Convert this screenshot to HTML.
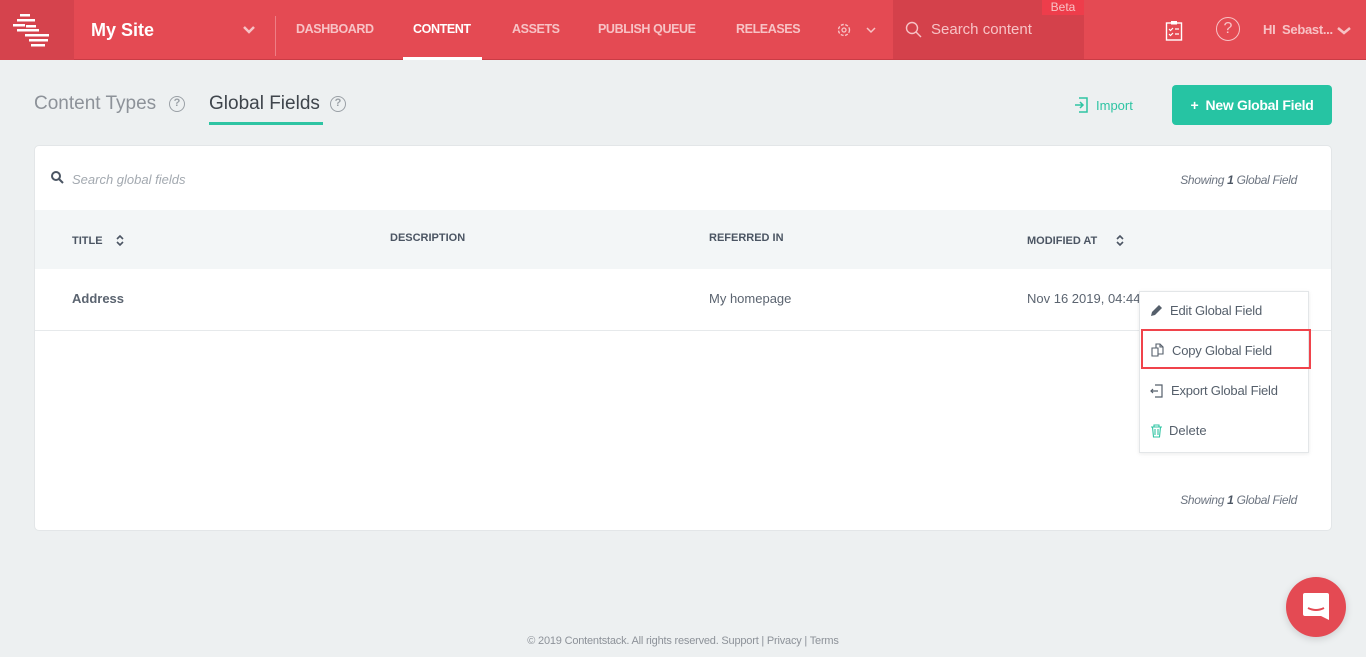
<!DOCTYPE html>
<html><head><style>
*{box-sizing:border-box;margin:0;padding:0}
body{width:1366px;height:657px;background:#edf0f1;font-family:"Liberation Sans",sans-serif;position:relative;overflow:hidden}
.top{position:absolute;left:0;top:0;width:1366px;height:60px;background:#e44a53;border-bottom:1px solid #c93c45}
.abs{position:absolute}
.nav{position:absolute;top:22px;font-size:12.5px;color:#f7c2c5;font-weight:bold;letter-spacing:-0.4px}
.card{position:absolute;left:34px;top:145px;width:1298px;height:386px;background:#fff;border:1px solid #e3e6e8;border-radius:5px}
.th{position:absolute;font-size:11px;font-weight:bold;color:#4b5563}
.mi{position:absolute;left:10px;font-size:13px;color:#555f6b}
</style></head><body>
<div class="top">
  <div class="abs" style="left:0;top:0;width:74px;height:60px;background:#d5434d"></div>
  <svg class="abs" style="left:12px;top:12px" width="44" height="36" viewBox="0 0 44 36" fill="#fff">
    <rect x="8" y="2" width="10" height="2.5"/><rect x="5" y="7" width="18" height="2.5"/><rect x="1" y="12" width="12" height="2.5"/><rect x="14" y="13" width="10" height="2.5"/>
    <rect x="5" y="17" width="22" height="2.5"/><rect x="13" y="22" width="24" height="2.5"/><rect x="17" y="27" width="19" height="2.5"/><rect x="19" y="32" width="14" height="2.5"/>
  </svg>
  <div class="abs" style="left:91px;top:20px;font-size:18px;font-weight:bold;color:#fff">My Site</div>
  <svg class="abs" style="left:242px;top:25px" width="14" height="10"><path d="M2 2l5 5 5-5" stroke="#f7c2c5" stroke-width="2.5" fill="none"/></svg>
  <div class="abs" style="left:275px;top:16px;width:1px;height:40px;background:#ee7e85"></div>
  <div class="nav" style="left:296px">DASHBOARD</div>
  <div class="nav" style="left:413px;color:#fff">CONTENT</div>
  <div class="abs" style="left:403px;top:57px;width:79px;height:3px;background:#fff"></div>
  <div class="nav" style="left:512px">ASSETS</div>
  <div class="nav" style="left:598px">PUBLISH QUEUE</div>
  <div class="nav" style="left:736px">RELEASES</div>
  <svg class="abs" style="left:836px;top:22px" width="16" height="16" viewBox="0 0 16 16"><circle cx="8" cy="8" r="5.5" stroke="#f7c2c5" stroke-width="1.4" fill="none" stroke-dasharray="3 1.5"/><circle cx="8" cy="8" r="2" stroke="#f7c2c5" stroke-width="1.3" fill="none"/></svg>
  <svg class="abs" style="left:865px;top:26px" width="12" height="8"><path d="M2 2l4 4 4-4" stroke="#f7c2c5" stroke-width="1.5" fill="none"/></svg>
  <div class="abs" style="left:893px;top:0;width:191px;height:59px;background:#d4414b"></div>
  <div class="abs" style="left:1042px;top:0;width:42px;height:15px;background:#ee3d4b;color:#f7c2c5;font-size:12px;text-align:center;line-height:15px">Beta</div>
  <svg class="abs" style="left:905px;top:21px" width="17" height="17"><circle cx="7" cy="7" r="5.5" stroke="#f7c2c5" stroke-width="1.4" fill="none"/><path d="M11 11l5 5" stroke="#f7c2c5" stroke-width="1.4"/></svg>
  <div class="abs" style="left:931px;top:21px;font-size:15px;color:#f7c2c5">Search content</div>
  <svg class="abs" style="left:1165px;top:20px" width="18" height="21"><rect x="1.5" y="3" width="15" height="17" stroke="#fff" stroke-width="1.4" fill="none"/><rect x="6" y="1" width="6" height="3.5" fill="#fff"/><path d="M4 9l1.5 1.5 2.5-2.5M10 9h4M4 14l1.5 1.5 2.5-2.5M10 14h4" stroke="#fff" stroke-width="1.2" fill="none"/></svg>
  <div class="abs" style="left:1216px;top:17px;width:24px;height:24px;border:1.5px solid #f7c2c5;border-radius:50%;color:#f7c2c5;font-size:16px;text-align:center;line-height:21px">?</div>
  <div class="abs" style="left:1263px;top:22px;font-size:13px;font-weight:bold;color:#f7c2c5;letter-spacing:-0.3px">HI &nbsp;Sebast...</div>
  <svg class="abs" style="left:1336px;top:26px" width="16" height="10"><path d="M2 2l6 5 6-5" stroke="#f7c2c5" stroke-width="2.5" fill="none"/></svg>
</div>

<div class="abs" style="left:34px;top:93px;font-size:19px;color:#8d9299">Content Types</div>
<div class="abs" style="left:169px;top:96px;width:16px;height:16px;border:1.5px solid #9aa0a6;border-radius:50%;font-size:11px;color:#9aa0a6;text-align:center;line-height:13px;font-weight:bold">?</div>
<div class="abs" style="left:209px;top:93px;font-size:19px;color:#3f454c">Global Fields</div>
<div class="abs" style="left:330px;top:96px;width:16px;height:16px;border:1.5px solid #9aa0a6;border-radius:50%;font-size:11px;color:#9aa0a6;text-align:center;line-height:13px;font-weight:bold">?</div>
<div class="abs" style="left:209px;top:122px;width:114px;height:3px;background:#2ec4a3"></div>

<svg class="abs" style="left:1074px;top:97px" width="14" height="16"><path d="M5 1h8v14H5M1 8h8M6 5l3 3-3 3" stroke="#2ec4a3" stroke-width="1.5" fill="none"/></svg>
<div class="abs" style="left:1096px;top:98px;font-size:13px;color:#2ec4a3">Import</div>
<div class="abs" style="left:1172px;top:85px;width:160px;height:40px;background:#26c4a3;border-radius:4px;color:#fff;font-size:14px;font-weight:bold;line-height:40px;text-align:center;letter-spacing:-0.3px">+ &nbsp;New Global Field</div>

<div class="card">
  <svg class="abs" style="left:16px;top:25px" width="13" height="13"><circle cx="5" cy="5" r="4" stroke="#4b5563" stroke-width="2" fill="none"/><path d="M8 8l4 4" stroke="#4b5563" stroke-width="2"/></svg>
  <div class="abs" style="left:37px;top:26px;font-size:13px;font-style:italic;color:#a3a9b0">Search global fields</div>
  <div class="abs" style="right:34px;top:27px;font-size:12px;font-style:italic;color:#6c7480;letter-spacing:-0.3px">Showing <b style="color:#4b5563">1</b> Global Field</div>
  <div class="abs" style="left:0;top:64px;width:1296px;height:59px;background:#f3f6f7"></div>
  <div class="th" style="left:37px;top:89px">TITLE</div>
  <svg class="abs" style="left:80px;top:88px" width="10" height="13"><path d="M2 5l3-3 3 3M2 8l3 3 3-3" stroke="#4b5563" stroke-width="1.6" fill="none"/></svg>
  <div class="th" style="left:355px;top:86px">DESCRIPTION</div>
  <div class="th" style="left:674px;top:86px">REFERRED IN</div>
  <div class="th" style="left:992px;top:89px">MODIFIED AT</div>
  <svg class="abs" style="left:1080px;top:88px" width="10" height="13"><path d="M2 5l3-3 3 3M2 8l3 3 3-3" stroke="#4b5563" stroke-width="1.6" fill="none"/></svg>
  <div class="abs" style="left:37px;top:145px;font-size:13px;font-weight:bold;color:#5b6470">Address</div>
  <div class="abs" style="left:674px;top:145px;font-size:13px;color:#5b6470">My homepage</div>
  <div class="abs" style="left:992px;top:145px;font-size:13px;color:#5b6470">Nov 16 2019, 04:44</div>
  <div class="abs" style="left:0;top:184px;width:1296px;height:1px;background:#e6e9eb"></div>
  <div class="abs" style="right:34px;top:347px;font-size:12px;font-style:italic;color:#6c7480;letter-spacing:-0.3px">Showing <b style="color:#4b5563">1</b> Global Field</div>
</div>

<div class="abs" style="left:1139px;top:291px;width:170px;height:162px;background:#fff;border:1px solid #e3e6e8;box-shadow:0 1px 4px rgba(0,0,0,.08)">
  <svg class="abs" style="left:10px;top:12px" width="13" height="13"><path d="M1 12l1-4 7-7 3 3-7 7z" fill="#555f6b"/></svg>
  <div class="mi" style="left:30px;top:11px;letter-spacing:-0.2px">Edit Global Field</div>
  <div class="abs" style="left:1px;top:37px;width:170px;height:40px;border:2px solid #f0434b"></div>
  <svg class="abs" style="left:11px;top:51px" width="15" height="15"><path d="M1 5h6v8H1zM5 5V1h4l3 3v7H7M9 1v3h3" stroke="#555f6b" stroke-width="1.1" fill="none"/></svg>
  <div class="mi" style="left:32px;top:51px;letter-spacing:-0.2px">Copy Global Field</div>
  <svg class="abs" style="left:10px;top:92px" width="14" height="14"><path d="M5 1h7v12H5M1 7h7M3 5l-2 2 2 2" stroke="#555f6b" stroke-width="1.2" fill="none"/></svg>
  <div class="mi" style="left:31px;top:91px;letter-spacing:-0.2px">Export Global Field</div>
  <svg class="abs" style="left:10px;top:132px" width="13" height="14"><path d="M1 3h11M4 3V1h5v2M2.5 3l1 10h6l1-10M5 5v6M8 5v6" stroke="#2ec4a3" stroke-width="1.1" fill="none"/></svg>
  <div class="mi" style="left:29px;top:131px">Delete</div>
</div>

<div class="abs" style="left:1286px;top:577px;width:60px;height:60px;border-radius:50%;background:#e44a53;box-shadow:0 2px 8px rgba(0,0,0,.15)">
  <svg class="abs" style="left:16px;top:16px" width="28" height="30"><path d="M3 0h22a2 2 0 0 1 2 2v25l-8-4H3a2 2 0 0 1-2-2V2a2 2 0 0 1 2-2z" fill="#fff"/><path d="M6 15q8 4 16 0" stroke="#e44a53" stroke-width="2" fill="none"/></svg>
</div>
<div class="abs" style="left:0;top:635px;width:1366px;text-align:center;font-size:11px;color:#8d9299;letter-spacing:-0.2px">© 2019 Contentstack. All rights reserved. Support | Privacy | Terms</div>
</body></html>
